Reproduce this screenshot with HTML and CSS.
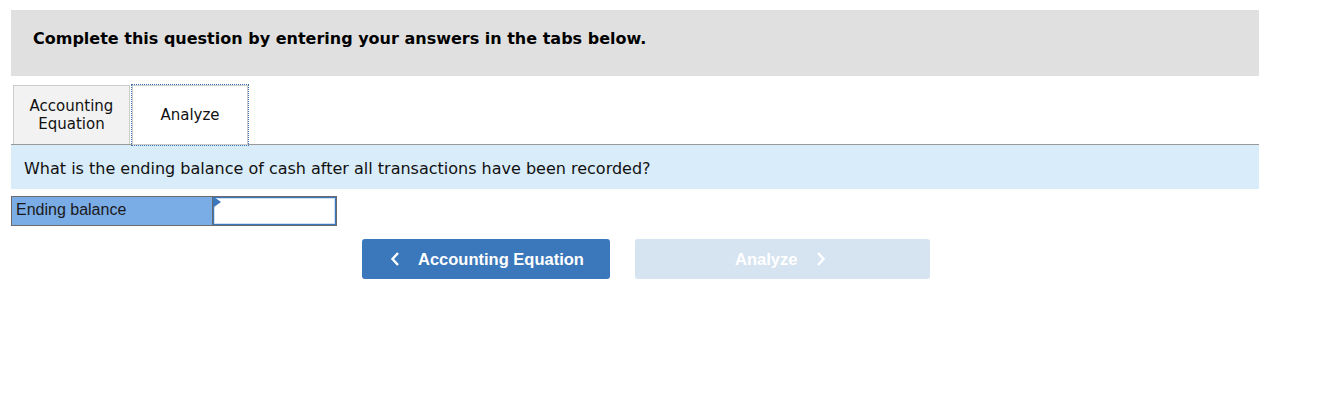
FILE: index.html
```html
<!DOCTYPE html>
<html>
<head>
<meta charset="utf-8">
<link rel="stylesheet" href="styles.css">
</head>
<body>
<div class="page">
  <div class="header">Complete this question by entering your answers in the tabs below.</div>
  <div class="tabs">
    <div class="tab">Accounting<br>Equation</div>
    <div class="tab active">Analyze</div>
  </div>
  <div class="question">What is the ending balance of cash after all transactions have been recorded?</div>
  <div class="answer-row">
    <div class="label">Ending balance</div>
    <div class="input"><span class="flag"></span></div>
  </div>
  <div class="nav">
    <div class="btn prev">
      <svg class="chev" width="10" height="16" viewBox="0 0 10 16"><path d="M8 2 L2.5 8 L8 14" fill="none" stroke="#fff" stroke-width="2.4"/></svg>
      <span>Accounting Equation</span>
    </div>
    <div class="btn next">
      <span>Analyze</span>
      <svg class="chev" width="10" height="16" viewBox="0 0 10 16"><path d="M2 2 L7.5 8 L2 14" fill="none" stroke="#fff" stroke-width="2.4"/></svg>
    </div>
  </div>
</div>
</body>
</html>
```
FILE: styles.css
```css
html, body { margin: 0; padding: 0; background: #fff; }
body { font-family: "DejaVu Sans", Verdana, sans-serif; color: #111; }
.page { width: 1248px; margin: 10px 0 0 11px; }
.header {
  background: #e0e0e0;
  height: 66px;
  box-sizing: border-box;
  padding: 19px 0 0 22px;
  font-weight: bold;
  font-size: 16px;
  color: #000;
}
.tabs {
  display: flex;
  align-items: flex-end;
  margin-top: 9px;
  padding-left: 2px;
  border-bottom: 1px solid #999;
  height: 60px;
  box-sizing: border-box;
}
.tab {
  width: 117px;
  height: 59px;
  box-sizing: border-box;
  background: #f2f2f2;
  border: 1px solid #ccc;
  border-bottom: none;
  display: flex;
  align-items: center;
  justify-content: center;
  text-align: center;
  font-size: 15px;
  line-height: 18px;
  color: #111;
  padding-bottom: 1px;
}
.tab.active {
  background: #fff;
  width: 116px;
  height: 60px;
  margin-left: 2px;
  margin-bottom: -1px;
  border: 1px solid #ccc;
  outline: 1px dotted #3a6fb5;
  outline-offset: 0;
  padding-bottom: 0;
}
.question {
  background: #d9ecf9;
  height: 44px;
  box-sizing: border-box;
  padding: 14px 0 0 13px;
  font-size: 16px;
  color: #111;
}
.answer-row {
  display: flex;
  margin-top: 7px;
  width: 326px;
  height: 30px;
  box-sizing: border-box;
  border: 1px solid #6b6b6b;
}
.label {
  width: 201px;
  background: #7aace6;
  font-family: "Liberation Sans", Arial, sans-serif;
  font-size: 16px;
  color: #1a1a1a;
  padding: 4px 0 0 4px;
  box-sizing: border-box;
  border-right: 1px solid #6b6b6b;
}
.input {
  flex: 1;
  position: relative;
  background: #fff;
  border: 1px solid #3a77bb;
  box-shadow: inset 0 0 0 1px #cfe0f5;
}
.flag {
  position: absolute;
  left: 0;
  top: -1px;
  width: 0;
  height: 0;
  border-top: 5px solid transparent;
  border-bottom: 5px solid transparent;
  border-left: 7px solid #3a77bb;
}
.nav {
  display: flex;
  margin-top: 13px;
  padding-left: 351px;
  gap: 25px;
}
.btn {
  height: 40px;
  border-radius: 3px;
  display: flex;
  align-items: center;
  font-family: "Liberation Sans", Arial, sans-serif;
  font-weight: bold;
  font-size: 16.5px;
  color: #fff;
  box-sizing: border-box;
}
.btn.prev {
  width: 248px;
  background: #3a77bb;
  padding-left: 28px;
}
.btn.prev .chev { margin-right: 18px; }
.btn.next {
  width: 295px;
  background: #d6e3f1;
  padding-left: 100px;
}
.btn.next .chev { margin-left: 19px; }
```
